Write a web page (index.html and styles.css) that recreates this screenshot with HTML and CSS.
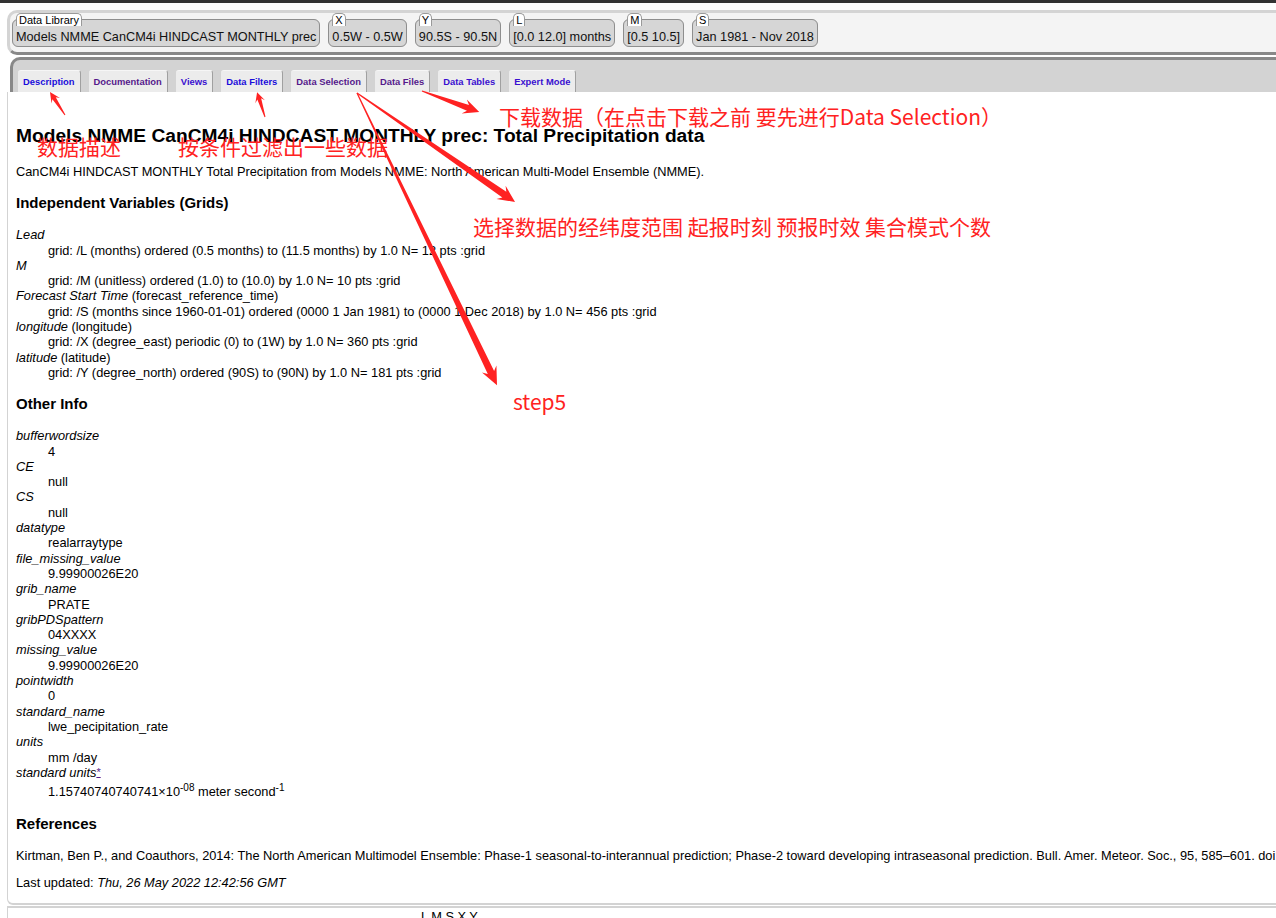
FILE: index.html
```html
<!DOCTYPE html>
<html lang="en">

<head>
	<meta charset="UTF-8">
	<title>Models NMME CanCM4i HINDCAST MONTHLY prec</title>
	<link rel="stylesheet" href="styles.css">
</head>

<body>

	<div class="topline"></div>

	<div class="page">

		<!-- selection bar -->
		<div class="bar">
			<fieldset class="field">
				<legend>Data Library</legend>
				Models NMME CanCM4i HINDCAST MONTHLY prec
			</fieldset>
			<fieldset class="field">
				<legend>X</legend>
				0.5W - 0.5W
			</fieldset>
			<fieldset class="field">
				<legend>Y</legend>
				90.5S - 90.5N
			</fieldset>
			<fieldset class="field">
				<legend>L</legend>
				[0.0 12.0] months
			</fieldset>
			<fieldset class="field">
				<legend>M</legend>
				[0.5 10.5]
			</fieldset>
			<fieldset class="field">
				<legend>S</legend>
				Jan 1981 - Nov 2018
			</fieldset>
		</div>

		<!-- tabs -->
		<div class="tabs">
			<a class="tab" href="#">Description</a>
			<a class="tab visited" href="#">Documentation</a>
			<a class="tab mid" href="#">Views</a>
			<a class="tab" href="#">Data Filters</a>
			<a class="tab visited" href="#">Data Selection</a>
			<a class="tab visited" href="#">Data Files</a>
			<a class="tab mid" href="#">Data Tables</a>
			<a class="tab mid" href="#">Expert Mode</a>
		</div>

		<div class="content">
			<h2>Models NMME CanCM4i HINDCAST MONTHLY prec: Total Precipitation data</h2>
			<p class="desc">CanCM4i HINDCAST MONTHLY Total Precipitation from Models NMME: North American Multi-Model Ensemble (NMME).</p>

			<h3>Independent Variables (Grids)</h3>
			<dl>
				<dt><i>Lead</i></dt>
				<dd>grid: /L (months) ordered (0.5 months) to (11.5 months) by 1.0 N= 12 pts :grid</dd>
				<dt><i>M</i></dt>
				<dd>grid: /M (unitless) ordered (1.0) to (10.0) by 1.0 N= 10 pts :grid</dd>
				<dt><i>Forecast Start Time</i> (forecast_reference_time)</dt>
				<dd>grid: /S (months since 1960-01-01) ordered (0000 1 Jan 1981) to (0000 1 Dec 2018) by 1.0 N= 456 pts :grid</dd>
				<dt><i>longitude</i> (longitude)</dt>
				<dd>grid: /X (degree_east) periodic (0) to (1W) by 1.0 N= 360 pts :grid</dd>
				<dt><i>latitude</i> (latitude)</dt>
				<dd>grid: /Y (degree_north) ordered (90S) to (90N) by 1.0 N= 181 pts :grid</dd>
			</dl>

			<h3>Other Info</h3>
			<dl>
				<dt><i>bufferwordsize</i></dt>
				<dd>4</dd>
				<dt><i>CE</i></dt>
				<dd>null</dd>
				<dt><i>CS</i></dt>
				<dd>null</dd>
				<dt><i>datatype</i></dt>
				<dd>realarraytype</dd>
				<dt><i>file_missing_value</i></dt>
				<dd>9.99900026E20</dd>
				<dt><i>grib_name</i></dt>
				<dd>PRATE</dd>
				<dt><i>gribPDSpattern</i></dt>
				<dd>04XXXX</dd>
				<dt><i>missing_value</i></dt>
				<dd>9.99900026E20</dd>
				<dt><i>pointwidth</i></dt>
				<dd>0</dd>
				<dt><i>standard_name</i></dt>
				<dd>lwe_pecipitation_rate</dd>
				<dt><i>units</i></dt>
				<dd>mm /day</dd>
				<dt><i>standard units</i><a class="star" href="#">*</a></dt>
				<dd>1.15740740740741&times;10<sup>-08</sup> meter second<sup>-1</sup></dd>
			</dl>

			<h3>References</h3>
			<p class="ref">Kirtman, Ben P., and Coauthors, 2014: The North American Multimodel Ensemble: Phase-1 seasonal-to-interannual prediction; Phase-2 toward developing intraseasonal prediction. Bull. Amer. Meteor. Soc., 95, 585&ndash;601. doi:10.1175/BAMS-D-12-00050.1</p>

			<p class="updated">Last updated: <i>Thu, 26 May 2022 12:42:56 GMT</i></p>
		</div> <!-- end content -->

		<div class="footer">L M S X Y</div>

	</div> <!-- end page -->

	<!-- red annotations drawn over the page -->
	<svg class="notes" width="1276" height="918" viewBox="0 0 1276 918">
		<g fill="#ff2222">
			<polygon transform="translate(65,115) rotate(-123.1)" points="0,-0.5 20,-2 17,-5 27.5,0 17,5 20,2 0,0.5" />
			<polygon transform="translate(265,117) rotate(-107.7)" points="0,-0.5 19,-2 16,-5 26,0 16,5 19,2 0,0.5" />
			<polygon transform="translate(422,91) rotate(20.2)" points="0,-0.6 49,-3 45,-7.5 61,0 45,7.5 49,3 0,0.6" />
			<polygon transform="translate(357,93) rotate(34.6)" points="0,-0.6 179,-3.5 175,-8 192,0 175,8 179,3.5 0,0.6" />
			<polygon transform="translate(357,93) rotate(64.4)" points="0,-0.6 310,-3.5 306,-8 324,0 306,8 310,3.5 0,0.6" />
		</g>
		<g class="note-text">
			<text x="37" y="155">数据描述</text>
			<text x="178" y="155">按条件过滤出一些数据</text>
			<text x="499" y="125">下载数据（在点击下载之前 要先进行Data Selection）</text>
			<text x="473" y="235">选择数据的经纬度范围 起报时刻 预报时效 集合模式个数</text>
			<text x="513" y="410">step5</text>
		</g>
	</svg>

</body>

</html>
```

FILE: styles.css
```css
html,
body {
	overflow: hidden;
}

body {
	background: #fff;
	color: #000;
	font: 12.8px/15.3px 'Liberation Sans', Arial, sans-serif;
	margin: 0;
	position: relative;
	width: 1276px;
	height: 918px;
}

.topline {
	background: #333;
	height: 3px;
}

.page {
	padding-left: 7px;
	width: 1500px;
}

/* selection bar */

.bar {
	align-items: flex-start;
	background: #f4f4f4;
	border: 3px solid;
	border-color: #d4d4d4 #888 #888 #d4d4d4;
	border-radius: 10px 0 0 10px;
	display: flex;
	gap: 8px;
	height: 39px;
	margin-top: 7px;
	padding: 0 0 0 2px;
}

.field {
	background: #d6d6d6;
	border: 1px solid #8e8e8e;
	border-radius: 6px;
	color: #111;
	font-size: 12.7px;
	line-height: 15px;
	margin: 0;
	padding: 4px 3px 1px;
	white-space: nowrap;
}

.field legend {
	background: #fff;
	border: 1px solid #999;
	border-bottom: 0;
	border-radius: 5px 5px 0 0;
	color: #000;
	font-size: 11px;
	line-height: 12px;
	padding: 0 2px;
}

/* tabs */

.tabs {
	background: #d3d3d3;
	border-left: 3px solid #888;
	border-top: 3px solid #888;
	border-radius: 10px 0 0 0;
	display: flex;
	gap: 8px;
	height: 22px;
	margin: 2px 0 0 3px;
	padding: 10px 0 0 5px;
}

.tab {
	background: #ececec;
	border-right: 1px solid #a0a0a0;
	border-top: 1px solid #f6f6f6;
	border-radius: 3px 3px 0 0;
	color: #1a0ddb;
	font-size: 9.4px;
	font-weight: 700;
	line-height: 21px;
	padding: 0 5px;
	text-decoration: none;
}

.tab.visited {
	color: #551a8b;
}

.tab.mid {
	color: #3a10d0;
}

/* content */

.content {
	border-bottom: 2px solid #d3d3d3;
	border-left: 1px solid #d3d3d3;
	border-radius: 0 0 0 6px;
	height: 811px;
	padding: 0 0 0 8px;
	overflow: hidden;
}

.content h2 {
	font-size: 19.2px;
	line-height: 22px;
	margin: 33px 0 17px;
}

.content h3 {
	font-size: 15px;
	line-height: 17px;
	margin: 15px 0 16px;
}

.content p,
.content dl {
	margin: 0;
}

.content dd {
	margin-left: 32px;
}

.content sup {
	font-size: 10px;
}

.star {
	color: #551a8b;
	font-size: 11px;
	vertical-align: top;
}

.content .ref {
	margin-top: 2px;
	white-space: nowrap;
}

.content .updated {
	margin-top: 12px;
}

.footer {
	border-left: 1px solid #d3d3d3;
	border-top: 2px solid #d3d3d3;
	margin-top: 1px;
	padding: 1px 0 0 413px;
}

/* annotations */

.notes {
	left: 0;
	pointer-events: none;
	position: absolute;
	top: 0;
}

.note-text {
	fill: #ff2222;
	font-family: 'Noto Sans CJK SC', 'Noto Sans', sans-serif;
	font-size: 21px;
}
```
